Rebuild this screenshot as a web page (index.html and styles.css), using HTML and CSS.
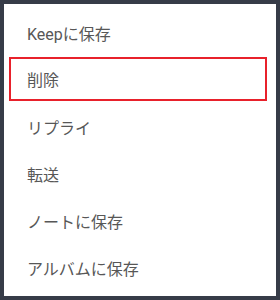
FILE: index.html
```html
<!DOCTYPE html>
<html lang="ja">
<head>
<meta charset="utf-8">
<link rel="stylesheet" href="styles.css">
</head>
<body>
<div class="panel">
  <ul class="menu">
    <li class="item">Keepに保存</li>
    <li class="item selected">削除</li>
    <li class="item">リプライ</li>
    <li class="item">転送</li>
    <li class="item">ノートに保存</li>
    <li class="item">アルバムに保存</li>
  </ul>
</div>
</body>
</html>
```
FILE: styles.css
```css
html, body {
  margin: 0;
  padding: 0;
  background: #363c48;
  width: 280px;
  height: 300px;
  overflow: hidden;
}
.panel {
  margin: 4px;
  width: 272px;
  height: 292px;
  background: #ffffff;
  box-sizing: border-box;
  padding-top: 5px;
}
.menu {
  list-style: none;
  margin: 0;
  padding: 0;
}
.item {
  height: 47px;
  display: flex;
  align-items: center;
  padding-left: 23px;
  font-family: Roboto, "Noto Sans CJK JP", sans-serif;
  font-size: 16px;
  color: #575757;
  box-sizing: border-box;
}
.item.selected {
  height: 44px;
  margin: 1px 9px 2px 5px;
  border: 2px solid #e8212b;
  padding-left: 16px;
}
```
